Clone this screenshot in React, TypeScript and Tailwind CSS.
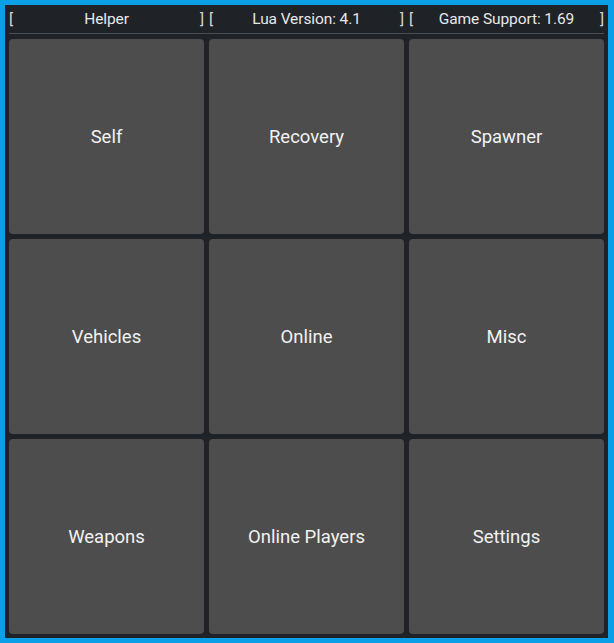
import React from "react";

const headerCells = ["Helper", "Lua Version: 4.1", "Game Support: 1.69"];

const menuItems = [
  "Self",
  "Recovery",
  "Spawner",
  "Vehicles",
  "Online",
  "Misc",
  "Weapons",
  "Online Players",
  "Settings",
];

export default function App() {
  return (
    <div
      className="w-[614px] h-[643px] flex flex-col bg-[#1f2227] border-t-[5px] border-b-[5px] border-l-[5px] border-r-[6px] border-[#0a9fe6] px-[4px] pb-[4px]"
      style={{ fontFamily: "Roboto, 'Liberation Sans', sans-serif" }}
    >
      {/* top info bar */}
      <div className="h-[28px] grid grid-cols-3 gap-[5px] items-center pt-[1px] text-[15.5px] text-[#e8e8e8]">
        {headerCells.map((label) => (
          <div key={label} className="flex items-center justify-between leading-none">
            <span className="text-[#d8d8d8]">[</span>
            <span className="tracking-[-0.1px]">{label}</span>
            <span className="text-[#d8d8d8]">]</span>
          </div>
        ))}
      </div>
      <div className="h-px bg-[#4a4e55]" />

      <div className="mt-[5px] grid grid-cols-3 grid-rows-3 gap-[5px] flex-1">
        {menuItems.map((item) => (
          <button
            key={item}
            className="bg-[#4d4d4d] rounded-[4px] flex items-center justify-center pt-[2px] text-[18.5px] text-[#f2f2f2]"
          >
            {item}
          </button>
        ))}
      </div>
    </div>
  );
}
